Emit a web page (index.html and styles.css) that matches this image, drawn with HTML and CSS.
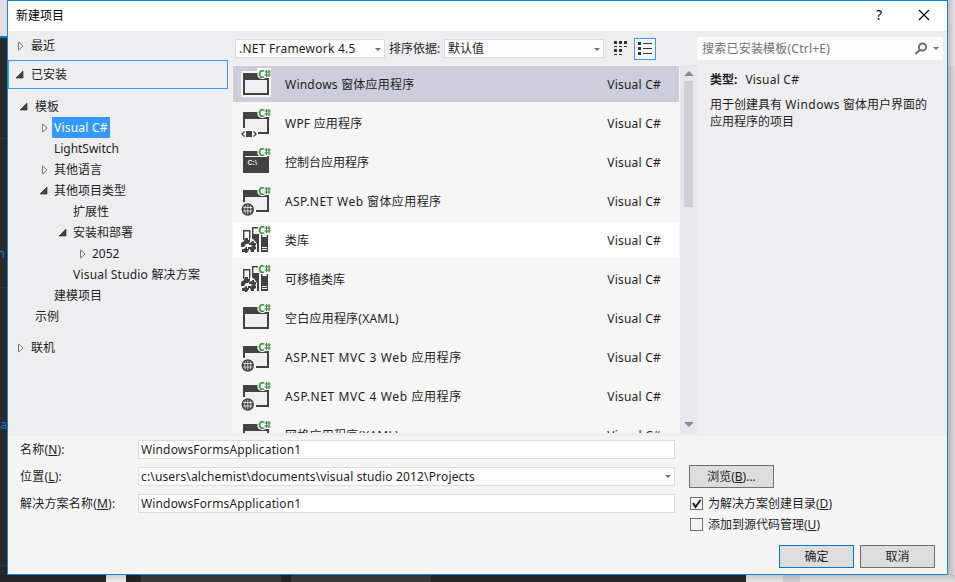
FILE: index.html
```
<!DOCTYPE html>
<html lang="zh-CN">
<head>
<meta charset="utf-8">
<title>新建项目</title>
<link rel="stylesheet" href="styles.css">
</head>
<body>
<svg class="defs" aria-hidden="true">
  <defs>
    <g id="cs">
      <text class="cs-c" x="17.2" y="9.6">C</text>
      <path class="green" d="M25.5 2v7M28 2v7M23.700 4h6M23.500 7h6"/>
    </g>
    <g id="window">
      <path class="light" d="M3 6h24v20H3z"/>
      <path class="dark" d="M2 5h14.5v3l1.5 2h10v17H2zM4 12v13h22V12z" fill-rule="evenodd"/>
    </g>
    <g id="web">
      <path class="light" d="M4 12h22v13H4z"/>
      <path class="dark" d="M2 5h14.5v3l1.5 2h10v17H15v-2h11V12H4v5H2z"/>
      <circle class="bg" cx="6.8" cy="24.5" r="7.4"/>
      <circle class="dark" cx="6.8" cy="24.5" r="6.2"/>
      <path class="mesh" d="M2.2 22.5h9.2M2.2 26h9.2M6.8 19.7v9.6M4.4 20.5q-1.4 4 0 8M9.2 20.5q1.4 4 0 8"/>
    </g>
    <g id="books">
      <path class="line" d="M2.7 16V6.7h6V18M11.7 13V3.7H17M20.7 14V8"/>
      <path class="dark" d="M11 10h7v18h-7zM20 13h7v15h-7z"/>
      <path class="line" d="M26.4 14V11"/>
      <path class="bg" d="M9 14l3 1 2 2 2 3v8H9z"/>
      <path class="white-line" d="M21 23.500h5M21 25.500h5"/>
      <path class="dark" d="M4 14h3v2h2v2l-2 2H5l-2 3H0v-4l3-2zM1 25h2l2-2h3v3l-2 3H4v-1H1zM11 17h2v2h2v2l-1 1 1 1v2l-2 1v2h-3l-1-3h-1v-2h2v-2H8v-2l3-1z"/>
      <path class="white-line" d="M7.500 20v2h4M6.500 23v2"/>
    </g>
  </defs>
</svg>
<div class="screen">
  <div class="upper">
    <div class="edge-left"><span class="frag one">n</span><span class="frag two">ta</span></div>
    <main class="dialog">
      <header class="titlebar">
        <h1>新建项目</h1>
        <span class="help">?</span>
        <svg class="close" width="12" height="12"><path d="M1 1l10 10M11 1L1 11"/></svg>
      </header>
      <div class="content">
        <nav class="sidebar">
          <div class="group recent"><svg class="tri" width="8" height="10"><path d="M1.5 1v8L6 5z"/></svg><span>最近</span></div>
          <div class="group installed"><svg class="tri open" width="8" height="8"><path d="M7 0v7H0z"/></svg><span>已安装</span></div>
          <ul class="tree">
            <li class="l1"><svg class="tri open" width="8" height="8"><path d="M7 0v7H0z"/></svg><span>模板</span></li>
            <li class="l2"><svg class="tri" width="8" height="10"><path d="M1.5 1v8L6 5z"/></svg><span class="picked"><b class="vc">Visual C#</b></span></li>
            <li class="l2"><i class="tri"></i><span class="ls">LightSwitch</span></li>
            <li class="l2"><svg class="tri" width="8" height="10"><path d="M1.5 1v8L6 5z"/></svg><span>其他语言</span></li>
            <li class="l2"><svg class="tri open" width="8" height="8"><path d="M7 0v7H0z"/></svg><span>其他项目类型</span></li>
            <li class="l3"><i class="tri"></i><span>扩展性</span></li>
            <li class="l3"><svg class="tri open" width="8" height="8"><path d="M7 0v7H0z"/></svg><span>安装和部署</span></li>
            <li class="l4"><svg class="tri" width="8" height="10"><path d="M1.5 1v8L6 5z"/></svg><span>2052</span></li>
            <li class="l3"><i class="tri"></i><span class="vs">Visual Studio 解决方案</span></li>
            <li class="l2"><i class="tri"></i><span>建模项目</span></li>
            <li class="l1"><i class="tri"></i><span>示例</span></li>
          </ul>
          <div class="group online"><svg class="tri" width="8" height="10"><path d="M1.5 1v8L6 5z"/></svg><span>联机</span></div>
        </nav>
        <section class="center">
          <div class="toolbar">
            <div class="combo framework"><span>.NET Framework 4.5</span><i class="arrow"></i></div>
            <label>排序依据:</label>
            <div class="combo sort"><span>默认值</span><i class="arrow"></i></div>
            <svg class="grid-view" width="14" height="15"><path d="M0 0h3v3H0zM5 0h3v3H5zM10 0h3v3h-3zM0 8h3v3H0zM5 8h3v3H5zM0 5h3v1H0zM5 5h3v1H5zM10 5h3v1h-3zM0 13h3v1H0zM5 13h3v1H5z"/></svg>
            <div class="list-view"><svg width="14" height="13"><path d="M0 0h3v3H0zM0 5h3v3H0zM0 10h3v3H0zM5 1h9v1H5zM5 6h9v1H5zM5 11h9v1H5z"/></svg></div>
          </div>
          <div class="list-wrap">
            <div class="list">
              <div class="row selected"><svg class="icon" width="32" height="32"><path class="bg" d="M0 3h16l1-3h13v29H0z"/><use href="#window"/><use href="#cs"/></svg><span class="name n1">Windows 窗体应用程序</span><span class="lang">Visual C#</span></div>
              <div class="row"><svg class="icon" width="32" height="32"><path class="light" d="M4 12h22v13H4z"/><path class="dark" d="M2 5h14.5v3l1.5 2h10v17H17v-2h9V12H4v9H2z"/><path class="bg" d="M0 22h16v8H0z"/><path class="dark" d="M5 24h6v6H5z"/><path class="line" d="M3.5 24.5L1 27l2.500 2.500M12.500 24.500L15 27l-2.500 2.500"/><use href="#cs"/></svg><span class="name n2">WPF 应用程序</span><span class="lang">Visual C#</span></div>
              <div class="row"><svg class="icon" width="32" height="32"><path class="dark" d="M2 5h14.500v3l1.500 2h10v17H2z"/><path class="white-line" d="M4 10.500h22"/><text class="prompt" x="6.500" y="19">C:\</text><use href="#cs"/></svg><span class="name">控制台应用程序</span><span class="lang">Visual C#</span></div>
              <div class="row"><svg class="icon" width="32" height="32"><use href="#web"/><use href="#cs"/></svg><span class="name n4">ASP.NET Web 窗体应用程序</span><span class="lang">Visual C#</span></div>
              <div class="row hover"><svg class="icon" width="32" height="32"><path class="bg" d="M0 3h16l1-3h13v29H0z"/><use href="#books"/><use href="#cs"/></svg><span class="name">类库</span><span class="lang">Visual C#</span></div>
              <div class="row"><svg class="icon" width="32" height="32"><use href="#books"/><use href="#cs"/></svg><span class="name">可移植类库</span><span class="lang">Visual C#</span></div>
              <div class="row"><svg class="icon" width="32" height="32"><use href="#window"/><use href="#cs"/></svg><span class="name n7">空白应用程序(XAML)</span><span class="lang">Visual C#</span></div>
              <div class="row"><svg class="icon" width="32" height="32"><use href="#web"/><use href="#cs"/></svg><span class="name n8">ASP.NET MVC 3 Web 应用程序</span><span class="lang">Visual C#</span></div>
              <div class="row"><svg class="icon" width="32" height="32"><use href="#web"/><use href="#cs"/></svg><span class="name n8">ASP.NET MVC 4 Web 应用程序</span><span class="lang">Visual C#</span></div>
              <div class="row"><svg class="icon" width="32" height="32"><use href="#window"/><use href="#cs"/></svg><span class="name n7">网格应用程序(XAML)</span><span class="lang">Visual C#</span></div>
            </div>
            <div class="scrollbar"><i class="up"></i><i class="thumb"></i><i class="down"></i></div>
          </div>
        </section>
        <aside class="details">
          <div class="search"><span>搜索已安装模板(Ctrl+E)</span>
            <svg width="14" height="14"><circle cx="8.500" cy="5" r="3.600"/><path d="M5.800 7.800L1.500 12"/></svg><i class="arrow"></i></div>
          <p class="kind"><strong>类型:</strong><span class="vc">Visual C#</span></p>
          <p class="desc">用于创建具有 <span class="win">Windows</span> 窗体用户界面的<br>应用程序的项目</p>
        </aside>
      </div>
      <footer class="footer">
        <div class="fields">
          <label>名称(<u>N</u>):</label><div class="input"><span class="wfa">WindowsFormsApplication1</span></div>
          <label>位置(<u>L</u>):</label><div class="input path"><span class="loc">c:\users\alchemist\documents\visual studio 2012\Projects</span><i class="arrow"></i></div>
          <label>解决方案名称(<u>M</u>):</label><div class="input"><span class="wfa">WindowsFormsApplication1</span></div>
        </div>
        <div class="options">
          <button class="browse">浏览(<u>B</u>)...</button>
          <div class="check"><svg width="13" height="13"><rect x=".5" y=".5" width="12" height="12"/><path d="M3 6l2.500 4L10.500 3"/></svg><span>为解决方案创建目录(<u>D</u>)</span></div>
          <div class="check"><svg width="13" height="13"><rect x=".5" y=".5" width="12" height="12"/></svg><span>添加到源代码管理(<u>U</u>)</span></div>
          <div class="actions"><button class="ok">确定</button><button>取消</button></div>
        </div>
      </footer>
    </main>
    <div class="edge-right"></div>
  </div>
  <div class="edge-bottom"></div>
</div>
</body>
</html>
```
FILE: styles.css
```
* { box-sizing: border-box; }
body { margin: 0; overflow: hidden; font: 12px/16px "Noto Sans", "Noto Sans CJK SC", sans-serif; color: #1e1e1e; }
h1, p, ul { margin: 0; padding: 0; font-weight: normal; }
ul { list-style: none; }
b { font-weight: normal; }
span, label { white-space: nowrap; }
.defs { position: absolute; width: 0; height: 0; }

.screen { width: 955px; height: 582px; display: flex; flex-direction: column; }
.upper { display: flex; height: 575px; }
.edge-left { position: relative; width: 7px; overflow: hidden; background: linear-gradient(#dedee0 0 36px, #0079cb 36px 38px, #29292b 38px 138px, #38383a 138px 139px, #29292b 139px 287px, #38383a 287px 288px, #29292b 288px 565px, #38383a 565px 566px, #29292b 566px); }
.frag { position: absolute; right: 2px; color: #1777c8; }
.frag.one { top: 246px; }
.frag.two { top: 417px; right: 0; }
.edge-right { width: 7px; background: linear-gradient(90deg, rgba(0,0,0,.16), rgba(0,0,0,0)), linear-gradient(#e4e4e5 0 66px, #d9d9da 66px); }
.edge-bottom { height: 7px; background: linear-gradient(rgba(0,0,0,.13), rgba(0,0,0,0)), linear-gradient(90deg, #272729 0 106px, #eeeeee 106px 126px, #242426 126px 141px, #3c3c3d 141px 281px, #242426 281px 291px, #3c3c3d 291px 431px, #272729 431px 746px, #e5e5e6 746px 783px, #cfcfd4 783px 800px, #dfdfe0 800px); }

.dialog { width: 941px; height: 575px; border: 1px solid #1883d7; background: #f5f5f5; display: flex; flex-direction: column; }
.titlebar { height: 30px; background: #fff; color: #000; display: flex; align-items: center; padding: 0 17px 2px 8px; }
.titlebar h1 { font-size: 12px; flex: 1; padding-top: 2px; }
.help { font-size: 14px; margin-right: 36px; }
.close path { stroke: #000; stroke-width: 1.2; }
.content { height: 405px; background: #eeeef0; display: flex; }

.sidebar { width: 224px; padding-top: 4px; }
.tri { width: 8px; flex: none; fill: #f8f8f8; stroke: #777; }
.tri.open { fill: #444; stroke: #222; stroke-width: .6; }
.group { display: flex; align-items: center; gap: 6px; padding-left: 9px; }
.recent { height: 24px; padding-bottom: 2px; }
.installed { width: 220px; height: 29px; margin-top: 1px; border: 1px solid #3399ff; padding-left: 7px; gap: 7px; }
.tree { padding-top: 7px; }
.tree li { height: 21px; display: flex; align-items: center; gap: 5px; }
.l1 { padding-left: 13px; }
.l1 .tri { margin-left: -1px; margin-right: 2px; }
.l2 { padding-left: 33px; }
.l3 { padding-left: 52px; }
.l4 { padding-left: 71px; }
.l2 .open, .l3 .open { margin-left: -1px; margin-right: 1px; }
.picked { background: #3399ff; color: #fff; height: 21px; width: 58px; line-height: 21px; padding-left: 2px; margin-left: -2px; }
.online { height: 21px; margin-top: 10px; }

.vc, .lang, .n1, .n2, .n7, .search span { letter-spacing: .22px; }
.n4 { letter-spacing: .42px; }
.n8 { letter-spacing: .6px; }
.vs { letter-spacing: .2px; }
.ls { letter-spacing: -.03px; }
.wfa, .loc { letter-spacing: .15px; }
.framework span { letter-spacing: .24px; }
.win { letter-spacing: .5px; }
.fields label { letter-spacing: .2px; }

.center { width: 465px; padding-top: 6px; }
.toolbar { height: 23px; display: flex; align-items: center; padding-left: 3px; }
.combo { height: 19px; background: #fcfcfc; border: 1px solid #dcdce6; display: flex; align-items: center; justify-content: space-between; padding: 0 3px; }
.combo .arrow { margin-top: 2px; }
.framework { width: 150px; }
.toolbar label { margin-left: 4px; width: 55px; }
.sort { width: 160px; }
.arrow { width: 0; height: 0; flex: none; border: 3px solid transparent; border-top-color: #717171; border-bottom: 0; }
.grid-view { margin-left: 10px; fill: #333; }
.list-view { width: 22px; height: 22px; margin-left: 6px; border: 1px solid #3399ff; background: #f8f8f8; display: grid; place-items: center; }
.list-view svg { fill: #333; }
.list-wrap { display: flex; height: 368px; margin-top: 5px; }
.list { width: 448px; background: #f6f6f6; overflow: hidden; padding: 1px 1px 0 1px; }
.row { height: 36px; margin-bottom: 3px; display: flex; align-items: center; padding-right: 18px; }
.selected { background: #cccedb; }
.hover { background: #fff; }
.icon { flex: none; margin-left: 8px; }
.name { margin-left: 12px; flex: 1; }
.name, .lang { padding-top: 2px; }
.scrollbar { width: 17px; background: #e8e8ec; display: flex; flex-direction: column; align-items: center; padding: 6px 0; }
.up, .down { width: 0; height: 0; border: 5px solid transparent; }
.up { border-top: 0; border-bottom-color: #868999; }
.down { border-bottom: 0; border-top-color: #868999; margin-top: auto; }
.thumb { width: 9px; height: 126px; margin-top: 5px; background: #d0d1d7; }

.dark { fill: #424242; }
.light { fill: #f0eff1; }
.bg { fill: #f6f6f6; }
.line { fill: none; stroke: #424242; stroke-width: 1.4; }
.white-line { fill: none; stroke: #f6f6f6; }
.mesh { fill: none; stroke: #f0eff1; stroke-width: .8; }
.green { stroke: #388a34; stroke-width: 1.1; }
.cs-c { font: bold 10px "Noto Sans", sans-serif; fill: #388a34; stroke: #f6f6f6; stroke-width: 2px; paint-order: stroke; }
.prompt { font: bold 7px "Liberation Sans", sans-serif; fill: #f6f6f6; }

.details { padding: 6px 4px 0 0; width: 250px; }
.search { height: 23px; background: #fcfcfc; color: #717171; display: flex; align-items: center; padding: 0 4px 0 5px; }
.search span { flex: 1; }
.search svg { fill: none; stroke: #717171; stroke-width: 2; margin-right: 5px; }
.kind { margin: 12px 0 0 13px; display: flex; gap: 8px; }
.desc { margin: 8px 0 0 13px; line-height: 17px; white-space: nowrap; }

.footer { flex: 1; display: flex; padding: 4px 12px 0 12px; }
.fields { width: 655px; display: grid; grid-template-columns: 118px 537px; grid-template-rows: 19px 19px 19px; row-gap: 8px; align-content: start; align-items: center; }
.input { height: 19px; border: 1px solid #dcdce6; background: #fff; display: flex; align-items: center; justify-content: space-between; padding: 0 3px 0 2px; }
.path { background: #fcfcfc; }
.options { flex: 1; padding: 25px 0 0 14px; }
button { font: inherit; color: #1e1e1e; background: #dddddd; border: 1px solid #707070; padding: 0; width: 75px; height: 23px; display: block; }
.browse { width: 85px; }
.check { height: 21px; display: flex; align-items: center; gap: 5px; padding-left: 1px; }
.browse + .check { margin-top: 5px; }
.check svg { fill: none; stroke: #707070; }
.check path { stroke: #1e1e1e; stroke-width: 2; }
.actions { display: flex; justify-content: flex-end; gap: 6px; margin-top: 10px; }
.actions .ok { border-color: #0078d7; }
u { text-underline-offset: 1px; }
```
